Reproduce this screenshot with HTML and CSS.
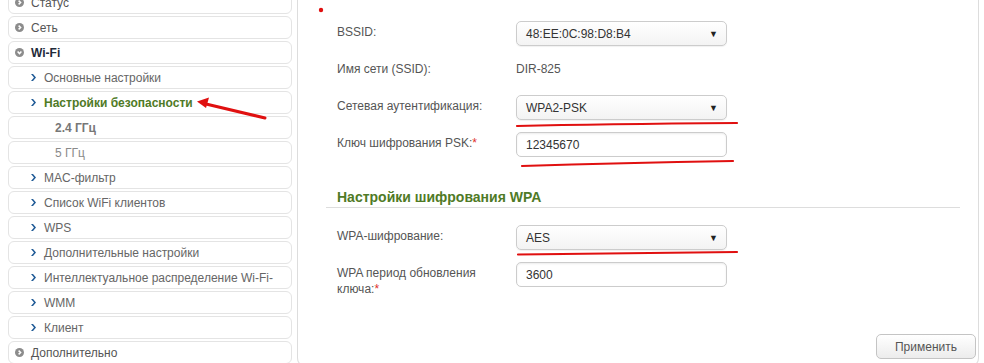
FILE: index.html
```html
<!DOCTYPE html>
<html lang="ru">
<head>
<meta charset="utf-8">
<title>Wi-Fi — Настройки безопасности</title>
<link rel="stylesheet" href="styles.css">
</head>
<body>
<div class="page">
  <nav class="sidebar">
    <div class="nav-item top"><svg class="ico" viewBox="0 0 9 9"><circle cx="4.5" cy="4.5" r="4.5" fill="#8c8c8c"/><path d="M3.6 2.6 L5.6 4.5 L3.6 6.4" stroke="#fff" stroke-width="1.5" fill="none"/></svg><span>Статус</span></div>
    <div class="nav-item top"><svg class="ico" viewBox="0 0 9 9"><circle cx="4.5" cy="4.5" r="4.5" fill="#8c8c8c"/><path d="M3.6 2.6 L5.6 4.5 L3.6 6.4" stroke="#fff" stroke-width="1.5" fill="none"/></svg><span>Сеть</span></div>
    <div class="nav-item top open"><svg class="ico" viewBox="0 0 9 9"><circle cx="4.5" cy="4.5" r="4.5" fill="#8c8c8c"/><path d="M2.6 3.6 L4.5 5.6 L6.4 3.6" stroke="#fff" stroke-width="1.5" fill="none"/></svg><span>Wi-Fi</span></div>
    <div class="nav-item sub"><svg class="arr" viewBox="0 0 5 7"><polygon points="0,0 2,0 5,3.5 2,7 0,7 3,3.5" fill="#1f5a96"/></svg><span>Основные настройки</span></div>
    <div class="nav-item sub active"><svg class="arr" viewBox="0 0 5 7"><polygon points="0,0 2,0 5,3.5 2,7 0,7 3,3.5" fill="#1f5a96"/></svg><span>Настройки безопасности</span></div>
    <div class="nav-item subsub cur"><span>2.4 ГГц</span></div>
    <div class="nav-item subsub"><span>5 ГГц</span></div>
    <div class="nav-item sub"><svg class="arr" viewBox="0 0 5 7"><polygon points="0,0 2,0 5,3.5 2,7 0,7 3,3.5" fill="#1f5a96"/></svg><span>MAC-фильтр</span></div>
    <div class="nav-item sub"><svg class="arr" viewBox="0 0 5 7"><polygon points="0,0 2,0 5,3.5 2,7 0,7 3,3.5" fill="#1f5a96"/></svg><span>Список WiFi клиентов</span></div>
    <div class="nav-item sub"><svg class="arr" viewBox="0 0 5 7"><polygon points="0,0 2,0 5,3.5 2,7 0,7 3,3.5" fill="#1f5a96"/></svg><span>WPS</span></div>
    <div class="nav-item sub"><svg class="arr" viewBox="0 0 5 7"><polygon points="0,0 2,0 5,3.5 2,7 0,7 3,3.5" fill="#1f5a96"/></svg><span>Дополнительные настройки</span></div>
    <div class="nav-item sub"><svg class="arr" viewBox="0 0 5 7"><polygon points="0,0 2,0 5,3.5 2,7 0,7 3,3.5" fill="#1f5a96"/></svg><span>Интеллектуальное распределение Wi-Fi-</span></div>
    <div class="nav-item sub"><svg class="arr" viewBox="0 0 5 7"><polygon points="0,0 2,0 5,3.5 2,7 0,7 3,3.5" fill="#1f5a96"/></svg><span>WMM</span></div>
    <div class="nav-item sub"><svg class="arr" viewBox="0 0 5 7"><polygon points="0,0 2,0 5,3.5 2,7 0,7 3,3.5" fill="#1f5a96"/></svg><span>Клиент</span></div>
    <div class="nav-item top"><svg class="ico" viewBox="0 0 9 9"><circle cx="4.5" cy="4.5" r="4.5" fill="#8c8c8c"/><path d="M3.6 2.6 L5.6 4.5 L3.6 6.4" stroke="#fff" stroke-width="1.5" fill="none"/></svg><span>Дополнительно</span></div>
  </nav>

  <main class="panel">
    <div class="row">
      <div class="label">BSSID:</div>
      <div class="select"><span>48:EE:0C:98:D8:B4</span><span class="caret">▼</span></div>
    </div>
    <div class="row">
      <div class="label">Имя сети (SSID):</div>
      <div class="value">DIR-825</div>
    </div>
    <div class="row">
      <div class="label">Сетевая аутентификация:</div>
      <div class="select"><span>WPA2-PSK</span><span class="caret">▼</span></div>
    </div>
    <div class="row">
      <div class="label">Ключ шифрования PSK:<span class="req">*</span></div>
      <div class="input">12345670</div>
    </div>

    <h2 class="section">Настройки шифрования WPA</h2>

    <div class="row">
      <div class="label">WPA-шифрование:</div>
      <div class="select"><span>AES</span><span class="caret">▼</span></div>
    </div>
    <div class="row">
      <div class="label">WPA период обновления ключа:<span class="req">*</span></div>
      <div class="input">3600</div>
    </div>

    <div class="actions">
      <button class="btn" type="button">Применить</button>
    </div>
  </main>
</div>

<svg class="marks" width="984" height="363" viewBox="0 0 984 363">
  <circle cx="321" cy="10" r="2.2" fill="#e01010"/>
  <path d="M517 126 Q600 124 737 123" stroke="#e01010" stroke-width="2.2" fill="none" stroke-linecap="round"/>
  <path d="M522 166 Q620 163 733 161" stroke="#e01010" stroke-width="2.2" fill="none" stroke-linecap="round"/>
  <path d="M518 254.5 Q620 253 737 252" stroke="#e01010" stroke-width="2.2" fill="none" stroke-linecap="round"/>
  <line x1="265" y1="118" x2="206" y2="104" stroke="#e01010" stroke-width="3" stroke-linecap="round"/>
  <polygon points="197,101.5 209,97.5 206,108" fill="#e01010"/>
</svg>
</body>
</html>
```

FILE: styles.css
```css
html, body {
  margin: 0;
  padding: 0;
  background: #ffffff;
}

body {
  font-family: "Liberation Sans", Arial, sans-serif;
  font-size: 12px;
  color: #555555;
  position: relative;
  width: 984px;
  height: 363px;
  overflow: hidden;
}

.page {
  display: flex;
  align-items: flex-start;
  margin-top: -9px;
  padding-left: 8px;
}

/* Sidebar */
.sidebar {
  width: 284px;
  display: flex;
  flex-direction: column;
  gap: 2px;
  flex: none;
}

.nav-item {
  height: 21px;
  border: 1px solid #e4e4e4;
  border-radius: 6px;
  display: flex;
  align-items: center;
  white-space: nowrap;
  overflow: hidden;
  color: #666666;
}

.nav-item.top {
  padding-left: 6px;
  color: #555555;
}

.nav-item.top .ico {
  width: 9px;
  height: 9px;
  margin-right: 7px;
  flex: none;
}

.nav-item.open span {
  font-weight: bold;
  color: #1f2b3a;
}

.nav-item.sub {
  padding-left: 22px;
}

.nav-item.sub .arr {
  width: 5px;
  height: 7px;
  margin-right: 8px;
  flex: none;
}

.nav-item.active span {
  font-weight: bold;
  color: #4f7a26;
}

.nav-item.subsub {
  padding-left: 46px;
  color: #8a8a8a;
}

.nav-item.subsub.cur span {
  font-weight: bold;
  color: #777777;
}

/* Panel */
.panel {
  margin-left: 5px;
  border: 1px solid #dddddd;
  border-top: none;
  border-radius: 0 0 9px 9px;
  padding: 30px 0 7px 39px;
  box-sizing: content-box;
  display: flex;
  flex-direction: column;
  width: 641px;
}

.row {
  display: flex;
  align-items: flex-start;
  min-height: 25px;
  margin-bottom: 12px;
}

.label {
  width: 155px;
  margin-right: 24px;
  padding-top: 3px;
  line-height: 16px;
  color: #555555;
  flex: none;
}

.req {
  color: #e0312c;
}

.value {
  padding-top: 3px;
  line-height: 16px;
  color: #555555;
}

.select,
.input {
  width: 211px;
  height: 25px;
  box-sizing: border-box;
  border: 1px solid #cccccc;
  border-radius: 5px;
  display: flex;
  align-items: center;
  justify-content: space-between;
  padding: 0 8px 0 9px;
  color: #333333;
  flex: none;
}

.select {
  background: linear-gradient(#ffffff, #f3f3f3);
  box-shadow: 0 1px 1px rgba(0, 0, 0, 0.06);
}

.input {
  background: #ffffff;
  box-shadow: inset 0 1px 2px rgba(0, 0, 0, 0.08);
}

.caret {
  font-size: 9px;
  color: #222222;
}

.section {
  margin: 20px 18px 17px -11px;
  padding: 0 0 1px 11px;
  border-bottom: 1px solid #dddddd;
  font-size: 14px;
  line-height: 17px;
  font-weight: bold;
  color: #4f7a26;
}

.actions {
  display: flex;
  justify-content: flex-end;
  margin-top: 25px;
  padding-right: 2px;
}

.btn {
  width: 100px;
  height: 25px;
  border: 1px solid #c4c4c4;
  border-radius: 5px;
  background: linear-gradient(#ffffff, #ececec);
  font-family: "Liberation Sans", Arial, sans-serif;
  font-size: 12px;
  color: #555555;
  padding: 0;
}

/* Annotation overlay */
.marks {
  position: absolute;
  left: 0;
  top: 0;
  pointer-events: none;
}
```
